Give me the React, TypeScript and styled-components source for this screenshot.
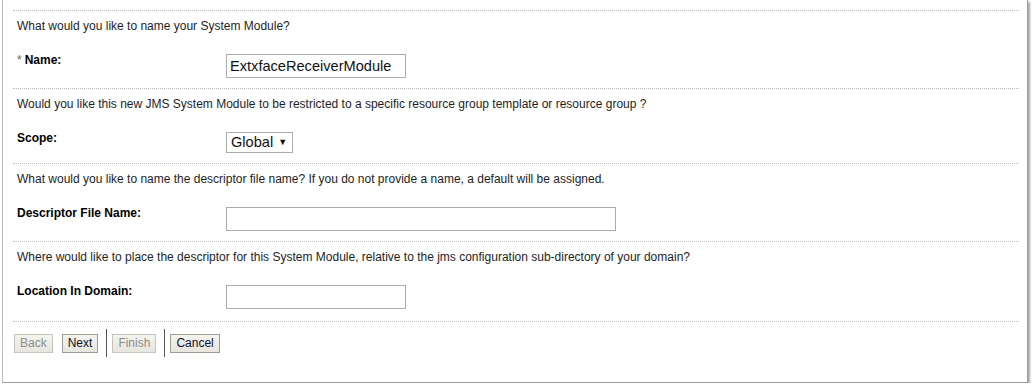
import { createGlobalStyle } from "styled-components";
import styled from "styled-components";

const GlobalStyle = createGlobalStyle`
  html, body {
    margin: 0;
    padding: 0;
    background: #ffffff;
  }
  body {
    font-family: "Liberation Sans", Arial, sans-serif;
  }
`;

// el panel blanco con borde gris y sombra abajo a la derecha
const Panel = styled.div`
  box-sizing: border-box;
  margin-left: 2px;
  width: 1026px;
  height: 383px;
  background: #ffffff;
  border-left: 1px solid #b9bec4;
  border-right: 1px solid #9a9ea2;
  border-bottom: 1px solid #9a9ea2;
  box-shadow: 2px 2px 2px rgba(0, 0, 0, 0.35);
  padding: 10px 8px 0 10px;
`;

const Section = styled.div<{ $bottom?: number }>`
  border-top: 1px dotted #bcbcbc;
  padding: 7px 0 ${(p) => p.$bottom ?? 10}px;
`;

const Question = styled.div`
  padding-left: 4px;
  font-size: 12px;
  line-height: 16px;
  color: #1e1e1e;
`;

const FieldRow = styled.div`
  display: flex;
  align-items: flex-start;
  margin-top: 18px;
  padding-left: 4px;
`;

const Label = styled.div`
  width: 209px;
  font-size: 12px;
  line-height: 16px;
  font-weight: bold;
  color: #000;
`;

const Required = styled.span`
  font-weight: normal;
  color: #666;
  margin-right: 3px;
`;

const TextInput = styled.div<{ $width: number }>`
  box-sizing: border-box;
  margin-top: 2px;
  width: ${(p) => p.$width}px;
  height: 24px;
  border: 1px solid #acacac;
  background: #fff;
  font-size: 14.6px;
  line-height: 22px;
  padding-left: 3px;
  color: #111;
`;

const Select = styled.div`
  box-sizing: border-box;
  margin-top: 2px;
  height: 21px;
  border: 1px solid #acacac;
  background: #fff;
  font-size: 14.6px;
  line-height: 19px;
  padding: 0 5px 0 4px;
  color: #111;
  display: flex;
  align-items: center;
  gap: 5px;
`;

const Arrow = styled.span`
  font-size: 9px;
`;

const ButtonBar = styled.div`
  border-top: 1px dotted #bcbcbc;
  padding-top: 7px;
  display: flex;
  align-items: center;
  padding-left: 1px;
`;

const Button = styled.div<{ $disabled?: boolean }>`
  box-sizing: border-box;
  height: 19px;
  padding: 0 5px;
  border: 1px solid ${(p) => (p.$disabled ? "#c4c4bc" : "#9c9c94")};
  background: linear-gradient(#f4f4ee, #e6e6de);
  font-size: 12px;
  line-height: 17px;
  color: ${(p) => (p.$disabled ? "#8c8c8c" : "#101030")};
`;

const Divider = styled.div`
  width: 1px;
  height: 28px;
  background: #555;
  margin: 0 5px 0 8px;
`;

const Gap = styled.div`
  width: 9px;
`;

function App() {
  return (
    <>
      <GlobalStyle />
      <Panel>
        <Section>
          <Question>What would you like to name your System Module?</Question>
          <FieldRow>
            <Label>
              <Required>*</Required>Name:
            </Label>
            <TextInput $width={180}>ExtxfaceReceiverModule</TextInput>
          </FieldRow>
        </Section>
        <Section>
          <Question>
            Would you like this new JMS System Module to be restricted to a specific resource group template or
            resource group ?
          </Question>
          <FieldRow>
            <Label>Scope:</Label>
            <Select>
              Global <Arrow>▼</Arrow>
            </Select>
          </FieldRow>
        </Section>
        <Section>
          <Question>
            What would you like to name the descriptor file name? If you do not provide a name, a default will be
            assigned.
          </Question>
          <FieldRow>
            <Label>Descriptor File Name:</Label>
            <TextInput $width={390} />
          </FieldRow>
        </Section>
        <Section $bottom={12}>
          <Question>
            Where would like to place the descriptor for this System Module, relative to the jms configuration
            sub-directory of your domain?
          </Question>
          <FieldRow>
            <Label>Location In Domain:</Label>
            <TextInput $width={180} />
          </FieldRow>
        </Section>
        <ButtonBar>
          <Button $disabled>Back</Button>
          <Gap />
          <Button>Next</Button>
          <Divider />
          <Button $disabled>Finish</Button>
          <Divider />
          <Button>Cancel</Button>
        </ButtonBar>
      </Panel>
    </>
  );
}

export default App;
